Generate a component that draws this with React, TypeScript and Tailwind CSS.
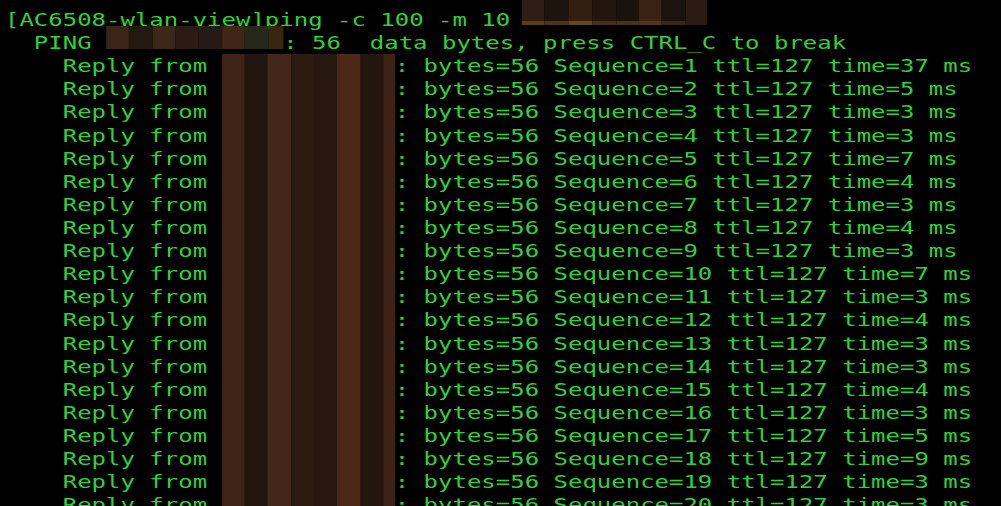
import React from "react";

const times = [37, 5, 3, 3, 7, 4, 3, 4, 3, 7, 3, 4, 3, 3, 4, 3, 5, 9, 3, 3, 4];

function ReplyMosaic() {
  return (
    <div className="flex w-[12ch] self-stretch">
      <div className="flex-[2] bg-[#3f2316]" />
      <div className="flex-[2] bg-[#22150f]" />
      <div className="flex-[2] bg-[#452719]" />
      <div className="flex-[2] bg-[#2d1a12]" />
      <div className="flex-[2] bg-[#271811]" />
      <div className="flex-[2] bg-[#4b2916]" />
      <div className="flex-[2] bg-[#23160f]" />
      <div className="flex-[1] bg-[#3d2215]" />
    </div>
  );
}

function PingMosaic() {
  return (
    <div className="flex w-[133px] h-[23px] -mt-[5px] self-start">
      <div className="flex-[23] bg-[#3b2418]" />
      <div className="flex-[24] bg-[#231812]" />
      <div className="flex-[23] bg-[#3c2818]" />
      <div className="flex-[23] bg-[#2b1b14]" />
      <div className="flex-[24] bg-[#271913]" />
      <div className="flex-[23] bg-[#3f2617]" />
      <div className="flex-[23] bg-[#24291a]" />
      <div className="flex-[15] bg-[#38270f]" />
    </div>
  );
}

function CmdMosaic() {
  return (
    <div className="flex flex-col w-[139px] h-[27px] -mt-[10px] -ml-[2px] self-start">
      <div className="flex h-[23px]">
        <div className="flex-[23] bg-[#2e1d13]" />
        <div className="flex-[24] bg-[#1d1410]" />
        <div className="flex-[23] bg-[#321f12]" />
        <div className="flex-[24] bg-[#22160f]" />
        <div className="flex-[23] bg-[#1a120d]" />
        <div className="flex-[23] bg-[#3a2314]" />
        <div className="flex-[24] bg-[#1b130e]" />
        <div className="flex-[21] bg-[#2b1b12]" />
      </div>
      <div className="flex h-[4px]">
        <div className="flex-[23] bg-[#5b3a1c]" />
        <div className="flex-[24] bg-[#4d311a]" />
        <div className="flex-[23] bg-[#6a4420]" />
        <div className="flex-[24] bg-[#4a2f18]" />
        <div className="flex-[23] bg-[#4a3019]" />
        <div className="flex-[23] bg-[#553519]" />
        <div className="flex-[24] bg-[#3a2616]" />
        <div className="flex-[21] bg-[#2a1c12]" />
      </div>
    </div>
  );
}

export default function App() {
  return (
    <div className="w-[1001px] h-[506px] overflow-hidden bg-black pl-[5px] pt-[8px]">
      <div
        className="origin-left scale-x-[1.332] text-[18px] leading-[23.12px] text-[#2ed23a] whitespace-pre"
        style={{ fontFamily: '"DejaVu Sans Mono", "Liberation Mono", monospace' }}
      >
        <div className="flex h-[23.12px]">
          <span>{"[AC6508-wlan-view]ping -c 100 -m 10 "}</span>
          <CmdMosaic />
        </div>
        <div className="flex h-[23.12px]">
          <span>{"  PING "}</span>
          <PingMosaic />
          <span>{": 56  data bytes, press CTRL_C to break"}</span>
        </div>
        {times.map((t, i) => (
          <div key={i} className="flex h-[23.12px]">
            <span>{"    Reply from "}</span>
            <ReplyMosaic />
            <span>{`: bytes=56 Sequence=${i + 1} ttl=127 time=${t} ms`}</span>
          </div>
        ))}
      </div>
    </div>
  );
}
